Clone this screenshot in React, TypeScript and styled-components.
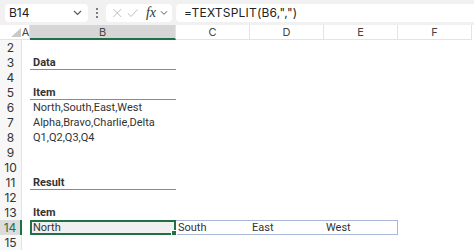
import * as React from 'react';
import styled, { createGlobalStyle } from 'styled-components';

const GlobalStyle = createGlobalStyle`
  html, body {
    margin: 0;
    padding: 0;
    background: #ffffff;
    overflow: hidden;
  }
  body {
    font-family: Inter, "Liberation Sans", Arial, sans-serif;
    color: #222;
  }
`;

const Window = styled.div`
  width: 474px;
  height: 250px;
  display: flex;
  flex-direction: column;
  background: #ffffff;
`;

const FormulaBar = styled.div`
  height: 25px;
  display: flex;
  align-items: center;
  gap: 4px;
  padding: 0 0 0 5px;
  background: #f1f1f1;
  box-sizing: border-box;
`;

const NameBox = styled.div`
  width: 83px;
  height: 18px;
  display: flex;
  align-items: center;
  justify-content: space-between;
  padding: 0 6px 0 4px;
  box-sizing: border-box;
  background: #fff;
  border-radius: 4px;
  font-size: 12px;
  color: #222;
`;

const Dots = styled.div`
  width: 10px;
  display: flex;
  flex-direction: column;
  align-items: center;
  gap: 2px;
  span {
    width: 2px;
    height: 2px;
    border-radius: 1px;
    background: #555;
  }
`;

const ToolBox = styled.div`
  width: 66px;
  height: 18px;
  display: flex;
  align-items: center;
  gap: 4px;
  padding: 0 4px 0 6px;
  box-sizing: border-box;
  background: #fff;
  border-radius: 4px;
`;

const Fx = styled.span`
  font-family: "Liberation Serif", "DejaVu Serif", serif;
  font-style: italic;
  font-size: 14px;
  color: #333;
  margin-left: 4px;
`;

const FormulaInput = styled.div`
  flex: 1;
  height: 18px;
  display: flex;
  align-items: center;
  padding-left: 8px;
  background: #fff;
  border-radius: 4px 0 0 4px;
  font-size: 12px;
  color: #222;
  letter-spacing: 0.2px;
`;

const Grid = styled.div`
  display: grid;
  grid-template-columns: 22px 8px 146px 74px 74px 74px 74px 2px;
  grid-auto-rows: 15px;
  font-family: Roboto, "Liberation Sans", Arial, sans-serif;
  font-size: 11px;
`;

const ColHead = styled.div<{ $active?: boolean }>`
  display: flex;
  align-items: center;
  justify-content: center;
  font-family: Inter, "Liberation Sans", Arial, sans-serif;
  color: #444;
  font-size: 11px;
  background: ${(p) => (p.$active ? '#d6d6d6' : '#fff')};
  border-right: 1px solid #e4e4e4;
  border-bottom: ${(p) => (p.$active ? '2px solid #1e7145' : '1px solid #e4e4e4')};
  box-sizing: border-box;
`;

const Corner = styled.div`
  position: relative;
  background: #fff;
  border-bottom: 1px solid #e4e4e4;
  &::after {
    content: '';
    position: absolute;
    right: 1px;
    bottom: 2px;
    border-left: 10px solid transparent;
    border-bottom: 9px solid #c8c8c8;
  }
`;

const RowHead = styled.div<{ $active?: boolean }>`
  display: flex;
  align-items: center;
  justify-content: center;
  font-family: Inter, "Liberation Sans", Arial, sans-serif;
  font-size: 12px;
  color: ${(p) => (p.$active ? '#1e7145' : '#333')};
  background: ${(p) => (p.$active ? '#dcdcdc' : '#f7f7f7')};
  border-right: ${(p) => (p.$active ? '2px solid #1e7145' : '1px solid #e4e4e4')};
  box-sizing: border-box;
`;

const Cell = styled.div<{ $bold?: boolean; $line?: boolean }>`
  display: flex;
  align-items: center;
  padding-left: 3px;
  white-space: nowrap;
  overflow: visible;
  font-weight: ${(p) => (p.$bold ? 700 : 400)};
  color: #333;
  border-bottom: ${(p) => (p.$line ? '1.5px solid #8a8a8a' : 'none')};
  box-sizing: border-box;
`;

const Selected = styled(Cell)`
  border: 2px solid #1e7145;
  background: #f0f0f0;
  position: relative;
  padding-left: 1px;
  &::after {
    content: '';
    position: absolute;
    right: -3px;
    bottom: -3px;
    width: 4px;
    height: 4px;
    background: #1e7145;
    border: 1px solid #fff;
  }
`;

const Spill = styled(Cell)<{ $last?: boolean }>`
  border-top: 1px solid #a9b7d8;
  border-bottom: 1px solid #a9b7d8;
  border-right: ${(p) => (p.$last ? '1px solid #a9b7d8' : 'none')};
  padding-left: 2px;
`;

const Chevron = () => (
  <svg width="9" height="6" viewBox="0 0 9 6">
    <path d="M1 1l3.5 3.5L8 1" fill="none" stroke="#555" strokeWidth="1.1" />
  </svg>
);

const CrossIcon = () => (
  <svg width="12" height="12" viewBox="0 0 12 12">
    <path d="M1.5 1.5l9 9M10.5 1.5l-9 9" stroke="#bcbcbc" strokeWidth="1.1" />
  </svg>
);

const CheckIcon = () => (
  <svg width="13" height="12" viewBox="0 0 13 12">
    <path d="M1 6.5l3.5 3.5L12 2" fill="none" stroke="#bcbcbc" strokeWidth="1.1" />
  </svg>
);

interface RowData {
  n: number;
  b?: string;
  bold?: boolean;
  line?: boolean;
}

const rows: RowData[] = [
  { n: 2 },
  { n: 3, b: 'Data', bold: true, line: true },
  { n: 4 },
  { n: 5, b: 'Item', bold: true, line: true },
  { n: 6, b: 'North,South,East,West' },
  { n: 7, b: 'Alpha,Bravo,Charlie,Delta' },
  { n: 8, b: 'Q1,Q2,Q3,Q4' },
  { n: 9 },
  { n: 10 },
  { n: 11, b: 'Result', bold: true, line: true },
  { n: 12 },
  { n: 13, b: 'Item', bold: true },
];

const columns = ['A', 'B', 'C', 'D', 'E', 'F'];

export default function App() {
  return (
    <Window>
      <GlobalStyle />
      <FormulaBar>
        <NameBox>
          <span>B14</span>
          <Chevron />
        </NameBox>
        <Dots>
          <span />
          <span />
          <span />
        </Dots>
        <ToolBox>
          <CrossIcon />
          <CheckIcon />
          <Fx>fx</Fx>
          <Chevron />
        </ToolBox>
        <FormulaInput>=TEXTSPLIT(B6,",")</FormulaInput>
      </FormulaBar>
      <Grid>
        <Corner />
        {columns.map((c) => (
          <ColHead key={c} $active={c === 'B'}>
            {c}
          </ColHead>
        ))}
        <div />
        {rows.map((r) => (
          <React.Fragment key={r.n}>
            <RowHead>{r.n}</RowHead>
            <Cell />
            <Cell $bold={r.bold} $line={r.line}>
              {r.b}
            </Cell>
            <Cell />
            <Cell />
            <Cell />
            <Cell />
            <div />
          </React.Fragment>
        ))}
        <RowHead $active>14</RowHead>
        <Cell />
        <Selected>North</Selected>
        <Spill>South</Spill>
        <Spill>East</Spill>
        <Spill $last>West</Spill>
        <Cell />
        <div />
        <RowHead>15</RowHead>
      </Grid>
    </Window>
  );
}
